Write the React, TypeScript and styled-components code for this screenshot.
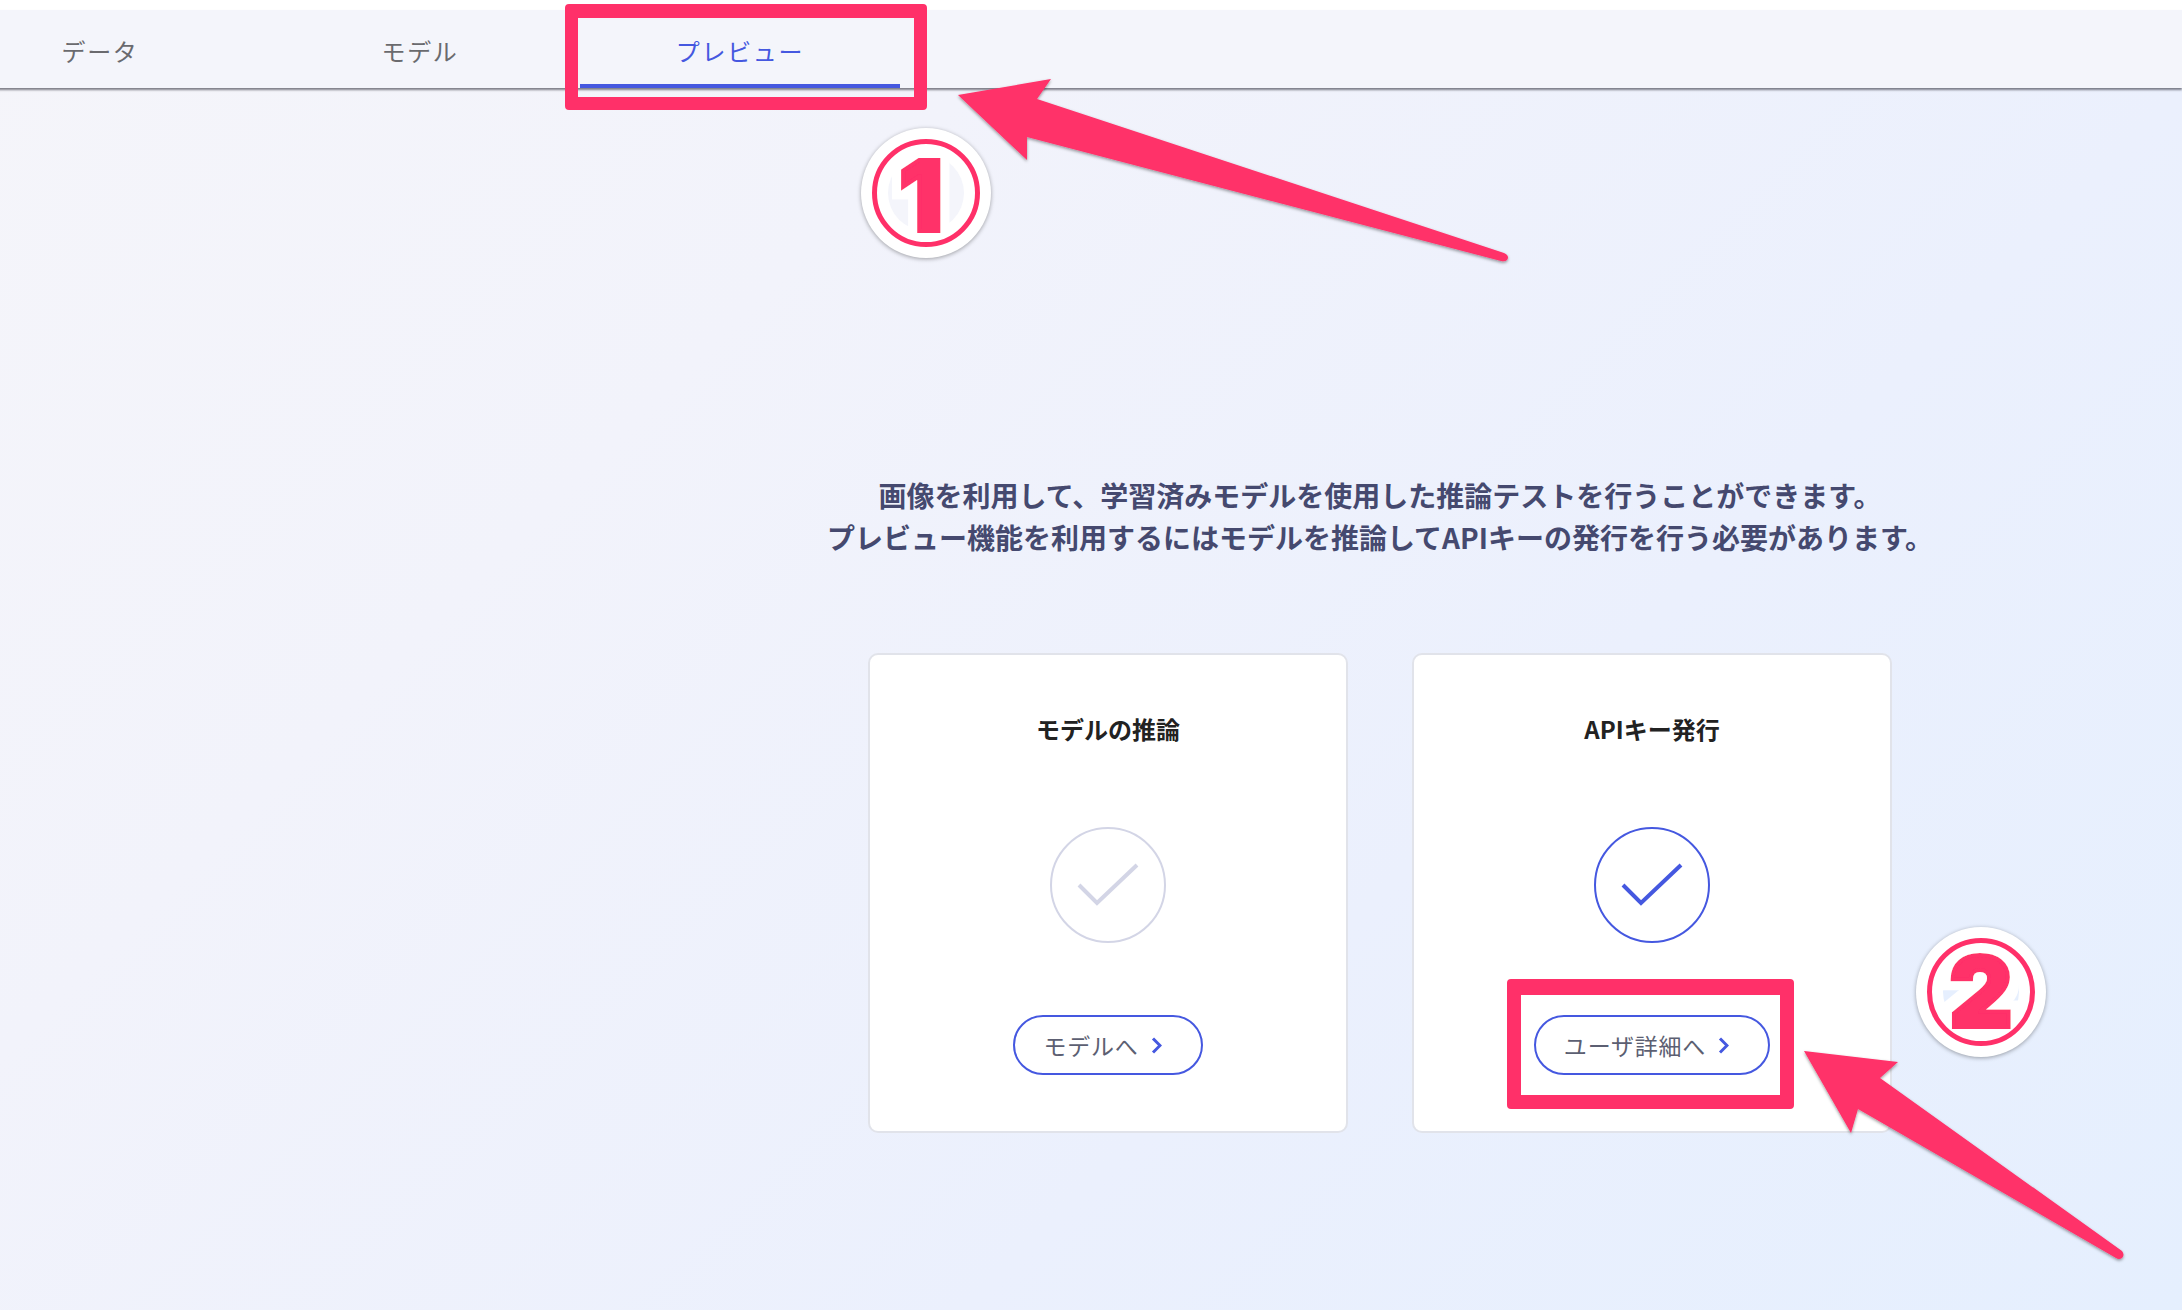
import React from 'react';
import styled, { createGlobalStyle } from 'styled-components';

const PINK = '#ff3069';
const BLUE = '#4558e0';
const MUTED = '#d3d5e6';

const GlobalStyle = createGlobalStyle`
  html, body {
    margin: 0;
    padding: 0;
    background: #fff;
  }
  * {
    box-sizing: border-box;
  }
`;

const Page = styled.div`
  position: relative;
  width: 2182px;
  height: 1310px;
  overflow: hidden;
  padding-top: 10px;
  background: #fff;
  font-family: 'Noto Sans CJK JP', 'Noto Sans', sans-serif;
`;

const Canvas = styled.div`
  height: 1300px;
  background: linear-gradient(135deg, #f5f5fa 0%, #f2f3fb 30%, #ebf0fd 65%, #e5effe 100%);
`;

const Nav = styled.nav`
  display: flex;
  height: 78px;
  background: #f4f5fb;
  box-shadow: 0 2px 2px rgba(30, 30, 40, 0.55);
  margin-left: -60px;
  position: relative;
`;

const Tab = styled.div<{ $active?: boolean }>`
  width: 320px;
  display: flex;
  align-items: center;
  justify-content: center;
  padding-top: 6px;
  font-size: 24px;
  letter-spacing: 1.7px;
  color: ${({ $active }) => ($active ? BLUE : '#6a6a6e')};
  border-bottom: 4px solid ${({ $active }) => ($active ? BLUE : 'transparent')};
`;

const Main = styled.main`
  padding: 386px 0 0 578px;
  display: flex;
  flex-direction: column;
  align-items: center;
`;

const Intro = styled.p`
  margin: 0 0 95px;
  text-align: center;
  font-size: 28px;
  font-weight: 700;
  line-height: 42px;
  color: #45496f;
`;

const Cards = styled.div`
  display: flex;
  gap: 64px;
`;

const Card = styled.section`
  width: 480px;
  height: 480px;
  display: flex;
  flex-direction: column;
  align-items: center;
  padding-top: 56px;
  background: #fff;
  border: 2px solid #e1e3ea;
  border-radius: 10px;
`;

const CardTitle = styled.h2`
  margin: 0 0 80px;
  font-size: 24px;
  line-height: 36px;
  font-weight: 700;
  color: #222;
`;

const CheckCircle = styled.div<{ $done?: boolean }>`
  width: 116px;
  height: 116px;
  display: flex;
  align-items: center;
  justify-content: center;
  border: 2px solid ${({ $done }) => ($done ? BLUE : MUTED)};
  border-radius: 50%;
  color: ${({ $done }) => ($done ? BLUE : MUTED)};
`;

const LinkButton = styled.button`
  height: 60px;
  margin-top: 72px;
  display: flex;
  align-items: center;
  gap: 12px;
  padding: 0 39px 0 28px;
  background: #fff;
  border: 2px solid ${BLUE};
  border-radius: 30px;
  font-family: inherit;
  font-size: 23px;
  letter-spacing: 0.8px;
  color: #5c5f72;
`;

const Frame = styled.div<{ $x: number; $y: number; $w: number; $h: number; $bw: string }>`
  position: absolute;
  left: ${({ $x }) => $x}px;
  top: ${({ $y }) => $y}px;
  width: ${({ $w }) => $w}px;
  height: ${({ $h }) => $h}px;
  border-style: solid;
  border-color: ${PINK};
  border-width: ${({ $bw }) => $bw};
  border-radius: 4px;
`;

const Overlay = styled.svg`
  position: absolute;
  left: 0;
  top: 0;
  overflow: visible;
`;

const Badge = styled.svg<{ $x: number; $y: number }>`
  position: absolute;
  left: ${({ $x }) => $x}px;
  top: ${({ $y }) => $y}px;
  overflow: visible;
  filter: drop-shadow(0 1px 2px rgba(0, 0, 0, 0.35));
`;

const Check = () => (
  <svg width="66" height="48" viewBox="0 0 66 48" fill="none">
    <path d="M4 24 L22 42 L62 4" stroke="currentColor" strokeWidth="4" />
  </svg>
);

const Chevron = () => (
  <svg width="11" height="17" viewBox="0 0 11 17" fill="none">
    <path d="M2 1.5 L9 8.5 L2 15.5" stroke={BLUE} strokeWidth="3" />
  </svg>
);

const NumberBadge = ({
  x,
  y,
  n,
  bg,
  digitX,
  baseline,
}: {
  x: number;
  y: number;
  n: string;
  bg: string;
  digitX: number;
  baseline: number;
}) => (
  <Badge $x={x} $y={y} width="130" height="130" viewBox="0 0 130 130">
    <defs>
      <filter id={`halo${n}`} x="-60%" y="-40%" width="220%" height="180%">
        <feMorphology in="SourceAlpha" operator="dilate" radius="9" result="fat" />
        <feFlood floodColor="#fff" />
        <feComposite in2="fat" operator="in" result="white" />
        <feMerge>
          <feMergeNode in="white" />
          <feMergeNode in="SourceGraphic" />
        </feMerge>
      </filter>
    </defs>
    <circle cx="65" cy="65" r="65" fill="#fff" />
    <circle cx="65" cy="65" r="38" fill={bg} />
    <text
      x={digitX}
      y={baseline}
      textAnchor="middle"
      fontFamily="Inter, 'Liberation Sans', sans-serif"
      fontWeight="900"
      fontSize="98"
      fill={PINK}
      stroke={PINK}
      strokeWidth="4"
      filter={`url(#halo${n})`}
    >
      {n}
    </text>
    <circle cx="65" cy="65" r="51.5" fill="none" stroke={PINK} strokeWidth="5" />
  </Badge>
);

const App: React.FC = () => {
  return (
    <Page>
      <GlobalStyle />
      <Canvas>
        <Nav>
          <Tab>データ</Tab>
          <Tab>モデル</Tab>
          <Tab $active>プレビュー</Tab>
        </Nav>
        <Main>
          <Intro>
            画像を利用して、学習済みモデルを使用した推論テストを行うことができます。
            <br />
            プレビュー機能を利用するにはモデルを推論してAPIキーの発行を行う必要があります。
          </Intro>
          <Cards>
            <Card>
              <CardTitle>モデルの推論</CardTitle>
              <CheckCircle>
                <Check />
              </CheckCircle>
              <LinkButton>
                モデルへ
                <Chevron />
              </LinkButton>
            </Card>
            <Card>
              <CardTitle>APIキー発行</CardTitle>
              <CheckCircle $done>
                <Check />
              </CheckCircle>
              <LinkButton>
                ユーザ詳細へ
                <Chevron />
              </LinkButton>
            </Card>
          </Cards>
        </Main>
      </Canvas>

      {/* annotations drawn over the screenshot */}
      <Frame $x={565} $y={4} $w={362} $h={106} $bw="14px 13px 13px 13px" />
      <Frame $x={1507} $y={979} $w={287} $h={130} $bw="16px 14px 14px 14px" />
      <Overlay width="2182" height="1310" viewBox="0 0 2182 1310">
        <defs>
          <filter id="arrowShadow" x="-5%" y="-5%" width="110%" height="115%">
            <feDropShadow dx="0" dy="1.5" stdDeviation="1.5" floodColor="#000" floodOpacity="0.4" />
          </filter>
        </defs>
        <path
          d="M958 95 L1051 79 L1037 99 L1504 253 Q1510 256 1507 260 Q1505 262 1501 261 L1027 137 L1027 160 Z"
          fill={PINK}
          filter="url(#arrowShadow)"
        />
        <path
          d="M1804 1051 L1898 1062 L1880 1078 L2122 1251 Q2125 1255 2122 1258 Q2119 1260 2116 1258 L1858 1109 L1851 1133 Z"
          fill={PINK}
          filter="url(#arrowShadow)"
        />
      </Overlay>
      <NumberBadge x={861} y={128} n="1" bg="#f4f5fb" digitX={60} baseline={103} />
      <NumberBadge x={1916} y={927} n="2" bg="#e6effe" digitX={65} baseline={100} />
    </Page>
  );
};

export default App;
